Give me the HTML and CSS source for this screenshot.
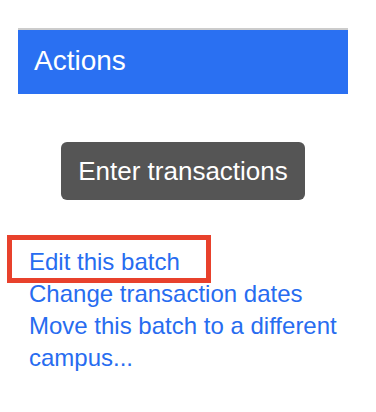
FILE: index.html
```html
<!DOCTYPE html>
<html lang="en">
<head>
    <meta charset="UTF-8">
    <meta name="viewport" content="width=device-width, initial-scale=1.0">
    <title>Batch Actions</title>
    <link rel="stylesheet" href="styles.css">
</head>
<body>
    <div class="panel">
        <h2 class="panel-title">Actions</h2>
        <div class="button-row">
            <button class="btn">Enter transactions</button>
        </div>
        <ul class="action-links">
            <li class="highlighted"><a href="#">Edit this batch</a></li>
            <li><a href="#">Change transaction dates</a></li>
            <li><a href="#">Move this batch to a different campus...</a></li>
        </ul>
    </div>
</body>
</html>
```

FILE: styles.css
```css
body {
    font-family: "Liberation Sans", Arial, sans-serif;
    margin: 0;
    background-color: white;
}
.panel {
    width: 330px;
    margin-left: 18px;
    padding-top: 28px;
}
.panel-title {
    margin: 0;
    border-top: 2px solid #cccccc;
    background-color: #2a70f2;
    color: white;
    font-size: 28px;
    font-weight: normal;
    line-height: 32px;
    padding: 15px 16px 17px;
}
.button-row {
    display: flex;
    justify-content: center;
    margin-top: 48px;
}
.btn {
    font-family: inherit;
    font-size: 26px;
    line-height: 30px;
    padding: 14px 17px;
    background-color: #555555;
    color: white;
    border: none;
    border-radius: 6px;
    cursor: pointer;
}
.action-links {
    list-style: none;
    margin: 46px 0 0;
    padding: 0 0 0 11px;
    font-size: 24px;
    line-height: 32px;
}
.action-links a {
    color: #276cf0;
    text-decoration: none;
}
.highlighted {
    position: relative;
}
.highlighted::before {
    content: "";
    position: absolute;
    left: -22px;
    top: -11px;
    width: 194px;
    height: 38px;
    border: 5px solid #e8412c;
}
```
